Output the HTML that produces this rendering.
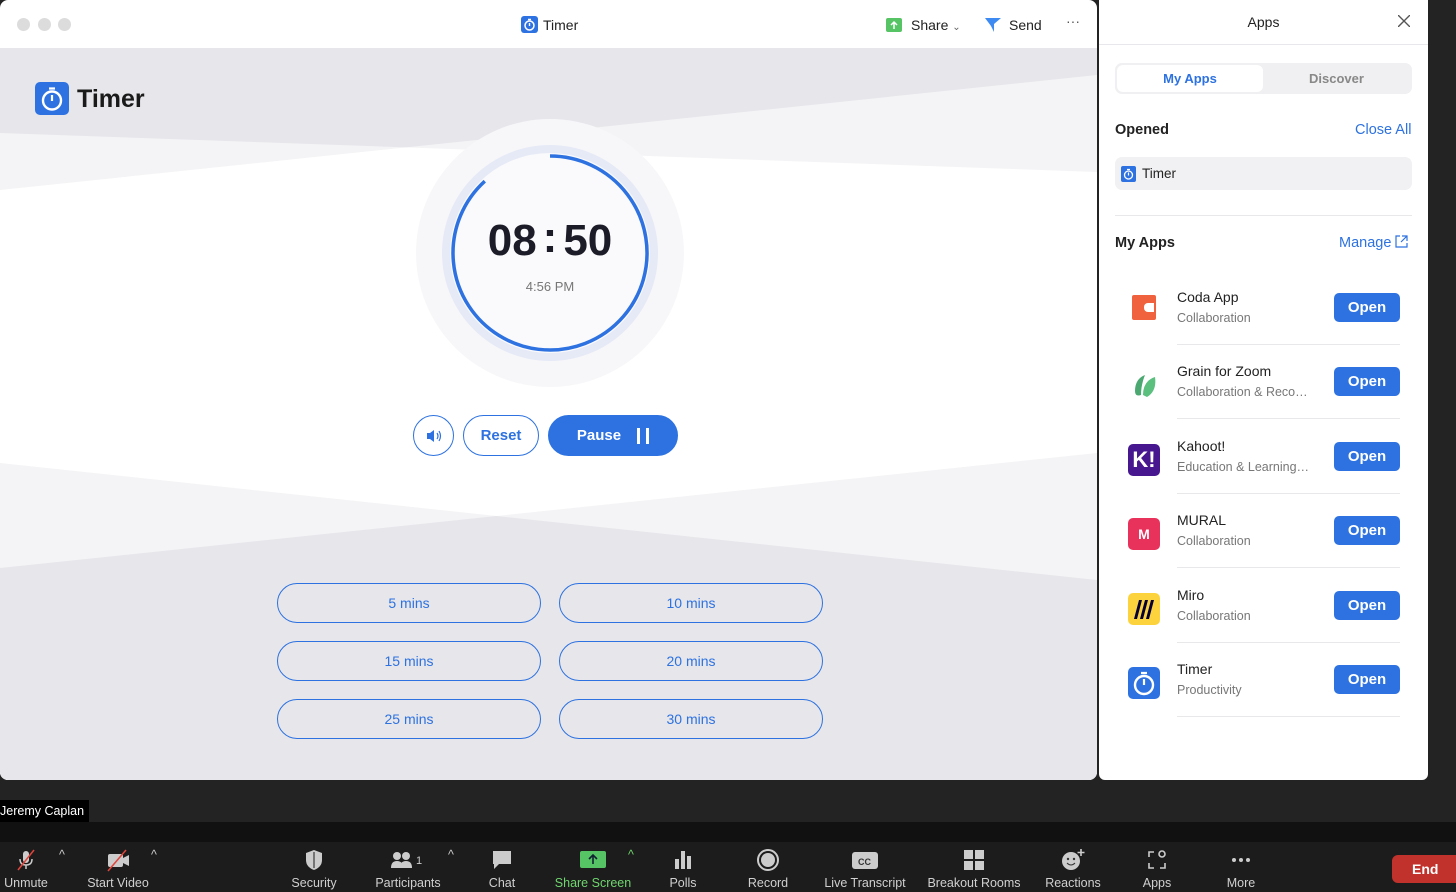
<!DOCTYPE html>
<html><head><meta charset="utf-8"><style>
*{margin:0;padding:0;box-sizing:border-box}
body{width:1456px;height:892px;background:#232323;font-family:"Liberation Sans",sans-serif;position:relative;overflow:hidden}
.abs{position:absolute}
.win{left:0;top:0;width:1097px;height:780px;background:#fff;border-radius:8px;overflow:hidden}
.dot{width:13px;height:13px;border-radius:50%;background:#dcdcdc;top:18px}
.pill{position:absolute;border:1.5px solid #2d72e0;border-radius:22px;color:#2d72e0;font-size:14px;display:flex;align-items:center;justify-content:center}
.side{left:1099px;top:0;width:329px;height:780px;background:#fff;border-radius:0 0 6px 6px}
.row{position:absolute;left:0;width:329px;height:75px}
.row .ic{position:absolute;left:29px;top:18px;width:32px;height:32px;border-radius:5px}
.row .n{position:absolute;left:78px;top:12px;font-size:14px;color:#222}
.row .c{position:absolute;left:78px;top:34px;font-size:12.5px;color:#777}
.row .o{position:absolute;left:235px;top:16px;width:66px;height:29px;border-radius:5px;background:#2d72e0;color:#fff;font-weight:bold;font-size:15px;line-height:30px;text-align:center}
.row .ln{position:absolute;left:78px;top:67px;width:223px;height:1px;background:#e8e8ea}
.tb{position:absolute;top:842px;height:50px;left:0;width:1456px;background:#1c1c1c}
.ti{position:absolute;top:0;width:100px;text-align:center;color:#d0d0d0;font-size:12.5px}
.ti span{position:absolute;top:34px;left:0;width:100%}
.ti svg{position:absolute;top:6px;left:50%;transform:translateX(-50%)}
</style></head><body>
<div class="abs win">
<svg class="abs" style="left:0;top:48px" width="1097" height="732" viewBox="0 48 1097 732">
<rect x="0" y="48" width="1097" height="732" fill="#fff"/>
<polygon points="0,48 1097,48 1097,172 406,147.4 0,190" fill="#f4f4f6"/>
<polygon points="0,48 1097,48 1097,75 406,147.4 0,133" fill="#e7e6eb"/>
<polygon points="0,463 496.5,516 1097,453 1097,780 0,780" fill="#f4f4f6"/>
<polygon points="0,568 496.5,516 1097,580 1097,780 0,780" fill="#e7e6eb"/>
<circle cx="550" cy="253" r="134" fill="#f7f7f9"/>
<circle cx="550" cy="253" r="104" fill="#fafafc" stroke="#e6eaf6" stroke-width="8"/>
<path d="M550,156 A97,97 0 1 1 484.8,181.2" fill="none" stroke="#2d72e0" stroke-width="3.5"/>
</svg>
<div class="abs dot" style="left:17px"></div><div class="abs dot" style="left:38px"></div><div class="abs dot" style="left:58px"></div>
<div class="abs" style="left:521px;top:16px;width:17px;height:17px;background:#2d72e0;border-radius:3px"><svg width="17" height="17"><circle cx="8.5" cy="9.5" r="4.5" fill="none" stroke="#fff" stroke-width="1.5"/><path d="M7 3.5h3M8.5 7v3" stroke="#fff" stroke-width="1.4"/></svg></div>
<div class="abs" style="left:543px;top:17px;font-size:14px;color:#222">Timer</div>
<div class="abs" style="left:886px;top:18px;width:16px;height:14px;background:#56c465;border-radius:2px"><svg width="16" height="14"><path d="M8 11V4M5 7l3-3 3 3" stroke="#fff" stroke-width="1.5" fill="none"/></svg></div>
<div class="abs" style="left:911px;top:17px;font-size:14px;color:#222">Share <span style="font-size:10px;color:#666">&#8964;</span></div>
<svg class="abs" style="left:985px;top:18px" width="16" height="14"><path d="M0 0h16L9 6v8L6 8z" fill="#3d8bf2"/></svg>
<div class="abs" style="left:1009px;top:17px;font-size:14px;color:#222">Send</div>
<div class="abs" style="left:1066px;top:13px;font-size:14px;color:#555">···</div>
<div class="abs" style="left:35px;top:82px;width:34px;height:33px;background:#2d72e0;border-radius:5px"><svg width="34" height="33"><circle cx="17" cy="18.5" r="9" fill="none" stroke="#fff" stroke-width="2.4"/><path d="M14 6.5h6M17 13v6" stroke="#fff" stroke-width="2.2"/></svg></div>
<div class="abs" style="left:77px;top:85px;font-size:25px;font-weight:bold;color:#1a1a1a">Timer</div>
<div class="abs" style="left:430px;top:216px;width:240px;text-align:center;font-size:44px;font-weight:bold;color:#1c1c28">08<span style="position:relative;top:-3px;padding:0 6px">:</span>50</div>
<div class="abs" style="left:450px;top:279px;width:200px;text-align:center;font-size:13px;color:#777">4:56 PM</div>
<div class="pill" style="left:413px;top:415px;width:41px;height:41px;background:#fff"><svg width="16" height="14"><path d="M1 4h3l4-3v12l-4-3H1z" fill="#2d72e0"/><path d="M11 4q2 3 0 6M13 2q3 5 0 10" stroke="#2d72e0" fill="none" stroke-width="1.2"/></svg></div>
<div class="pill" style="left:463px;top:415px;width:76px;height:41px;background:#fff;font-weight:bold;font-size:15px">Reset</div>
<div class="pill" style="left:548px;top:415px;width:130px;height:41px;background:#2d72e0;color:#fff;font-weight:bold;font-size:15px">Pause <span style="margin-left:16px;display:inline-block;width:3px;height:16px;background:#fff"></span><span style="margin-left:6px;display:inline-block;width:3px;height:16px;background:#fff"></span></div>
<div class="pill" style="left:277px;top:583px;width:264px;height:40px">5 mins</div>
<div class="pill" style="left:559px;top:583px;width:264px;height:40px">10 mins</div>
<div class="pill" style="left:277px;top:641px;width:264px;height:40px">15 mins</div>
<div class="pill" style="left:559px;top:641px;width:264px;height:40px">20 mins</div>
<div class="pill" style="left:277px;top:699px;width:264px;height:40px">25 mins</div>
<div class="pill" style="left:559px;top:699px;width:264px;height:40px">30 mins</div>
</div>
<div class="abs side">
<div class="abs" style="left:0;top:14px;width:329px;text-align:center;font-size:14px;color:#222">Apps</div>
<svg class="abs" style="left:299px;top:15px" width="12" height="12"><path d="M0 0L12 12M12 0L0 12" stroke="#555" stroke-width="1.4"/></svg>
<div class="abs" style="left:0;top:44px;width:329px;height:1px;background:#e8e8ec"></div>
<div class="abs" style="left:16px;top:63px;width:297px;height:31px;background:#f0f0f2;border-radius:7px"></div>
<div class="abs" style="left:18px;top:65px;width:146px;height:27px;background:#fff;border-radius:6px;text-align:center;line-height:27px;font-size:13px;font-weight:bold;color:#2d72e0">My Apps</div>
<div class="abs" style="left:164px;top:65px;width:147px;height:27px;text-align:center;line-height:27px;font-size:13px;font-weight:bold;color:#888">Discover</div>
<div class="abs" style="left:16px;top:122px;font-size:14.5px;font-weight:bold;color:#222">Opened</div>
<div class="abs" style="left:256px;top:122px;font-size:14.5px;color:#2d72e0">Close All</div>
<div class="abs" style="left:16px;top:157px;width:297px;height:33px;background:#f1f1f3;border-radius:7px"></div>
<div class="abs" style="left:22px;top:166px;width:15px;height:16px;background:#2d72e0;border-radius:2px"><svg width="15" height="16"><circle cx="7.5" cy="9" r="4" fill="none" stroke="#fff" stroke-width="1.3"/><path d="M6 3.5h3M7.5 6.5v3" stroke="#fff" stroke-width="1.2"/></svg></div>
<div class="abs" style="left:43px;top:166px;font-size:13.5px;color:#222">Timer</div>
<div class="abs" style="left:16px;top:215px;width:297px;height:1px;background:#e8e8ea"></div>
<div class="abs" style="left:16px;top:235px;font-size:14.5px;font-weight:bold;color:#222">My Apps</div>
<div class="abs" style="left:240px;top:235px;font-size:14.5px;color:#2d72e0">Manage <svg width="13" height="13" style="vertical-align:-1px"><path d="M5 1H1v11h11V8M7 1h5v5M12 1L6 7" stroke="#2d72e0" fill="none" stroke-width="1.2"/></svg></div>
<div class="row" style="top:277px"><div class="ic" style="left:33px;top:18px;width:24px;height:25px;background:#f0623e;border-radius:2px"><div style="position:absolute;left:12px;top:8px;width:10px;height:9px;background:#fff;border-radius:4px 0 0 4px"></div></div><div class="n">Coda App</div><div class="c">Collaboration</div><div class="o">Open</div><div class="ln"></div></div>
<div class="row" style="top:351px"><svg class="ic" width="32" height="32" style="left:30px"><path d="M6 22Q6 10 16 6Q12 16 12 26Q6 28 6 22z" fill="#4aa870"/><path d="M14 26Q14 12 26 8Q28 22 18 28z" fill="#5bbf7e"/></svg><div class="n">Grain for Zoom</div><div class="c">Collaboration &amp; Reco…</div><div class="o">Open</div><div class="ln"></div></div>
<div class="row" style="top:426px"><div class="ic" style="background:#46178f;color:#fff;font-weight:bold;font-size:22px;text-align:center;line-height:32px">K!</div><div class="n">Kahoot!</div><div class="c">Education &amp; Learning…</div><div class="o">Open</div><div class="ln"></div></div>
<div class="row" style="top:500px"><div class="ic" style="background:#e8315b;color:#fff;font-weight:bold;font-size:14px;text-align:center;line-height:32px">M</div><div class="n">MURAL</div><div class="c">Collaboration</div><div class="o">Open</div><div class="ln"></div></div>
<div class="row" style="top:575px"><div class="ic" style="background:#fcd33d"><svg width="32" height="32"><path d="M6 26L11 7h3L9 26zM12 26L17 7h3L15 26zM18 26L23 7h3L21 26z" fill="#050038"/></svg></div><div class="n">Miro</div><div class="c">Collaboration</div><div class="o">Open</div><div class="ln"></div></div>
<div class="row" style="top:649px"><div class="ic" style="background:#2d72e0"><svg width="32" height="32"><circle cx="16" cy="18" r="9" fill="none" stroke="#fff" stroke-width="2.4"/><path d="M13 6h6M16 12v6" stroke="#fff" stroke-width="2.2"/></svg></div><div class="n">Timer</div><div class="c">Productivity</div><div class="o">Open</div><div class="ln"></div></div>
</div>
<div class="abs" style="left:0;top:800px;width:89px;height:22px;background:#000;color:#fff;font-size:12.5px;line-height:22px">Jeremy Caplan</div>
<div class="abs" style="left:0;top:822px;width:1456px;height:20px;background:#111"></div>
<div class="tb">
<div class="ti" style="left:-24px"><svg width="24" height="24"><rect x="9" y="3" width="6" height="12" rx="3" fill="#ccc"/><path d="M6 11q0 6 6 6q6 0 6-6M12 17v4" stroke="#ccc" fill="none" stroke-width="1.5"/><path d="M4 22L20 2" stroke="#e0443a" stroke-width="1.5"/></svg><span>Unmute</span></div>
<div class="ti" style="left:9px;width:100px"><span style="top:6px;left:50px;width:auto;color:#ccc">^</span></div>
<div class="ti" style="left:68px"><svg width="28" height="24"><rect x="4" y="6" width="15" height="13" rx="2" fill="#ccc"/><path d="M19 10l6-3v11l-6-3z" fill="#ccc"/><path d="M4 23L22 2" stroke="#e0443a" stroke-width="1.5"/></svg><span>Start Video</span></div>
<div class="ti" style="left:101px"><span style="top:6px;left:50px;width:auto;color:#ccc">^</span></div>
<div class="ti" style="left:264px"><svg width="24" height="24"><path d="M12 2l8 3v7q0 7-8 10q-8-3-8-10V5z" fill="#ccc"/><path d="M12 4v16" stroke="#1c1c1c" stroke-width="1"/></svg><span>Security</span></div>
<div class="ti" style="left:358px"><svg width="40" height="24"><circle cx="9" cy="8" r="4" fill="#ccc"/><circle cx="18" cy="8" r="4" fill="#ccc"/><path d="M3 20q0-7 6-7q6 0 6 7zM12 20q0-7 6-7q6 0 6 7z" fill="#ccc"/><text x="28" y="16" fill="#ccc" font-size="11" font-family="Liberation Sans">1</text></svg><span>Participants</span></div>
<div class="ti" style="left:398px"><span style="top:6px;left:50px;width:auto;color:#ccc">^</span></div>
<div class="ti" style="left:452px"><svg width="24" height="24"><path d="M3 3h18v13H9l-5 5v-5H3z" fill="#ccc"/></svg><span>Chat</span></div>
<div class="ti" style="left:543px;color:#6fd66f"><svg width="26" height="24"><rect x="0" y="3" width="26" height="17" rx="2" fill="#56c465"/><path d="M13 16V8M9 11l4-4 4 4" stroke="#123" stroke-width="1.6" fill="none"/></svg><span>Share Screen</span></div>
<div class="ti" style="left:578px"><span style="top:6px;left:50px;width:auto;color:#6fd66f">^</span></div>
<div class="ti" style="left:633px"><svg width="24" height="24"><rect x="4" y="11" width="4" height="10" fill="#ccc"/><rect x="10" y="3" width="4" height="18" fill="#ccc"/><rect x="16" y="8" width="4" height="13" fill="#ccc"/></svg><span>Polls</span></div>
<div class="ti" style="left:718px"><svg width="24" height="24"><circle cx="12" cy="12" r="10" fill="none" stroke="#ccc" stroke-width="2"/><circle cx="12" cy="12" r="7" fill="#ccc"/></svg><span>Record</span></div>
<div class="ti" style="left:815px"><svg width="28" height="24"><rect x="1" y="4" width="26" height="17" rx="3" fill="#ccc"/><text x="7" y="17" fill="#333" font-size="9" font-weight="bold" font-family="Liberation Sans">CC</text></svg><span>Live Transcript</span></div>
<div class="ti" style="left:924px"><svg width="24" height="24"><rect x="2" y="2" width="9" height="9" fill="#ccc"/><rect x="13" y="2" width="9" height="9" fill="#ccc"/><rect x="2" y="13" width="9" height="9" fill="#ccc"/><rect x="13" y="13" width="9" height="9" fill="#ccc"/></svg><span>Breakout Rooms</span></div>
<div class="ti" style="left:1023px"><svg width="26" height="24"><circle cx="11" cy="13" r="9" fill="#ccc"/><circle cx="8" cy="11" r="1.2" fill="#333"/><circle cx="14" cy="11" r="1.2" fill="#333"/><path d="M7 15q4 4 8 0" stroke="#333" fill="none"/><path d="M21 1v7M17.5 4.5h7" stroke="#ccc" stroke-width="1.6"/></svg><span>Reactions</span></div>
<div class="ti" style="left:1107px"><svg width="24" height="24"><path d="M4 9V4h5M4 15v5h5M20 15v5h-5" stroke="#ccc" fill="none" stroke-width="1.6"/><circle cx="17" cy="6" r="3" fill="none" stroke="#ccc" stroke-width="1.6"/></svg><span>Apps</span></div>
<div class="ti" style="left:1191px"><svg width="24" height="24"><circle cx="5" cy="12" r="2" fill="#ccc"/><circle cx="12" cy="12" r="2" fill="#ccc"/><circle cx="19" cy="12" r="2" fill="#ccc"/></svg><span>More</span></div>
<div class="abs" style="left:1392px;top:13px;width:64px;height:28px;background:#c0322b;border-radius:6px 0 0 6px;color:#fff;font-weight:bold;font-size:14px;line-height:28px;padding-left:20px">End</div>
</div>
</body></html>
